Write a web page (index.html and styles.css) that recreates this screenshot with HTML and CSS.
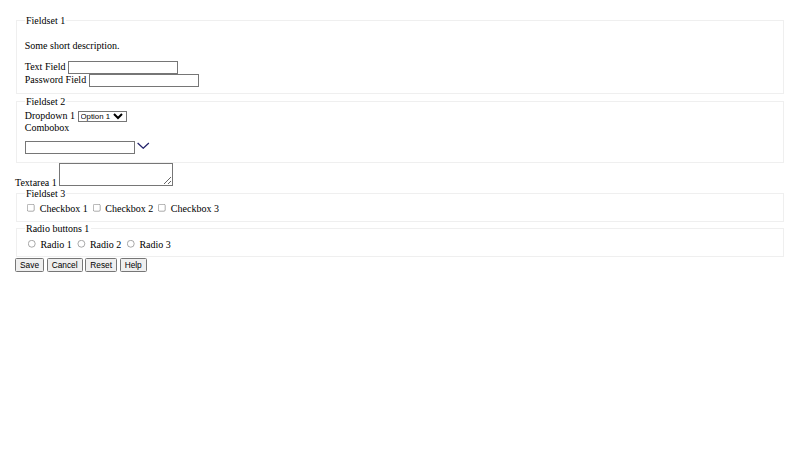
FILE: index.html
```html
<!DOCTYPE html>
<html>
<head>
<meta charset="utf-8">
<link rel="stylesheet" href="styles.css">
</head>
<body>
<form class="form">
  <fieldset class="group">
    <legend>Fieldset 1</legend>
    <p class="desc">Some short description.</p>
    <label>Text Field <input type="text" class="field"></label><br>
    <label>Password Field <input type="password" class="field"></label>
  </fieldset>
  <fieldset class="group group-combo">
    <legend>Fieldset 2</legend>
    <label>Dropdown 1 <select class="dropdown"><option>Option 1</option><option>Option 2</option></select></label><br>
    <label for="combo">Combobox</label>
    <div class="combo-row"><input type="text" id="combo" class="field"> <svg class="chev" viewBox="0 0 20 12" width="20" height="12"><polyline points="1,1.5 10,10 19,1.5" fill="none" stroke="#23236b" stroke-width="2"/></svg></div>
  </fieldset>
  <div class="area-row"><label>Textarea 1 <textarea class="area"></textarea></label></div>
  <fieldset class="group">
    <legend>Fieldset 3</legend>
    <div class="options">
      <label><input type="checkbox"> Checkbox 1</label>
      <label><input type="checkbox"> Checkbox 2</label>
      <label><input type="checkbox"> Checkbox 3</label>
    </div>
  </fieldset>
  <fieldset class="group">
    <legend>Radio buttons 1</legend>
    <div class="options radios">
      <label><input type="radio" name="r"> Radio 1</label>
      <label><input type="radio" name="r"> Radio 2</label>
      <label><input type="radio" name="r"> Radio 3</label>
    </div>
  </fieldset>
  <div class="actions">
    <button type="button">Save</button>
    <button type="button">Cancel</button>
    <button type="button">Reset</button>
    <button type="button">Help</button>
  </div>
</form>
</body>
</html>
```
FILE: styles.css
```css
html {
  zoom: 0.625;
}
body {
  margin: 24px;
  font-family: "Liberation Serif", "Times New Roman", serif;
  font-size: 16px;
  color: #000;
  background: #fff;
}
.group {
  margin: 0 2px 2px;
}
.group-combo {
  margin-bottom: 0;
  padding-bottom: 11px;
}
.desc {
  margin: 16px 0;
}
.field {
  box-sizing: border-box;
  width: 176px;
}
.dropdown {
  font-size: 12.5px;
}
.area-row {
  margin-top: -0.6px;
}
.area {
  box-sizing: border-box;
  width: 182px;
  height: 37px;
}
.combo-row {
  margin-top: 12px;
  padding-bottom: 2px;
}
.chev {
  vertical-align: top;
  margin-top: 2px;
}
.options {
  padding-bottom: 1px;
}
.radios {
  padding-bottom: 0;
}
.actions button {
  padding: 1px 6.5px;
}
```
